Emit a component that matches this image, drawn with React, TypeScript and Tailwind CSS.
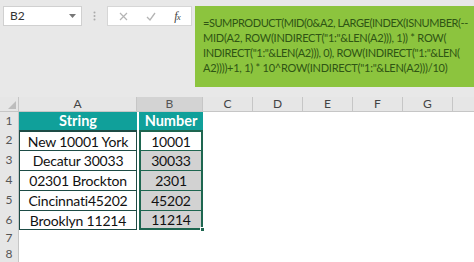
import React from "react";

const formulaLines = [
  { text: "=SUMPRODUCT(MID(0&A2, LARGE(INDEX(ISNUMBER(--", cls: "tracking-[-0.45px]" },
  { text: 'MID(A2, ROW(INDIRECT("1:"&LEN(A2))), 1)) * ROW(', cls: "tracking-[-0.25px]" },
  { text: 'INDIRECT("1:"&LEN(A2))), 0), ROW(INDIRECT("1:"&LEN(', cls: "tracking-[-0.35px]" },
  { text: 'A2))))+1, 1) * 10^ROW(INDIRECT("1:"&LEN(A2)))/10)', cls: "tracking-[-0.25px]" },
];

const rows = [
  { a: "New 10001 York", b: "10001" },
  { a: "Decatur 30033", b: "30033" },
  { a: "02301 Brockton", b: "2301" },
  { a: "Cincinnati45202", b: "45202" },
  { a: "Brooklyn 11214", b: "11214" },
];

const otherCols = ["C", "D", "E", "F", "G"];

function RowHead({ n, h }: { n: number; h: string }) {
  return (
    <div
      className={`w-[19px] ${h} shrink-0 bg-[#e6e6e6] border-r border-[#c6c6c6] flex items-center justify-center text-[12px] text-[#555]`}
    >
      {n}
    </div>
  );
}

export default function App() {
  return (
    <div className="w-[474px] h-[262px] bg-white overflow-hidden font-['Lato','Open_Sans',sans-serif]">
      {/* ribbon: name box, formula buttons and formula bar */}
      <div className="h-[97px] bg-[#e8e8e8] flex items-start pt-[6px] pl-[3px]">
        <div className="w-[79px] h-[20px] shrink-0 bg-white border border-[#d0d0d0] flex items-center justify-between pl-[6px] pr-[5px] text-[12px] text-[#333]">
          <span>B2</span>
          <svg width="7" height="4" viewBox="0 0 7 4">
            <path d="M0 0h7L3.5 4z" fill="#777" />
          </svg>
        </div>
        <div className="w-[25px] h-[20px] shrink-0 flex items-center justify-center">
          <svg width="3" height="10" viewBox="0 0 3 10">
            <circle cx="1.5" cy="1.5" r="1" fill="#aaa" />
            <circle cx="1.5" cy="5" r="1" fill="#aaa" />
            <circle cx="1.5" cy="8.5" r="1" fill="#aaa" />
          </svg>
        </div>
        <div className="w-[85px] h-[20px] shrink-0 bg-white border border-[#d6d6d6] flex items-center">
          <div className="w-[30px] flex justify-center">
            <svg width="9" height="9" viewBox="0 0 9 9">
              <path d="M1 1l7 7M8 1l-7 7" stroke="#b4b4b4" strokeWidth="1.2" />
            </svg>
          </div>
          <div className="w-[26px] flex justify-center">
            <svg width="10" height="9" viewBox="0 0 10 9">
              <path d="M1 5l3 3 5-7" stroke="#b4b4b4" strokeWidth="1.3" fill="none" />
            </svg>
          </div>
          <div className="flex-1 flex justify-center font-['Liberation_Serif',serif] italic text-[12px] text-[#444] leading-none">
            f<span className="text-[9px] -ml-[1px] mt-[3px]">x</span>
          </div>
        </div>
        <div className="ml-[3px] flex-1 min-w-0 h-[81px] bg-[#8cc43e] pl-[8px] pt-[9px] text-[11px] leading-[15px] text-[#2f5514] whitespace-nowrap overflow-hidden">
          {formulaLines.map((l) => (
            <div key={l.text} className={l.cls}>
              {l.text}
            </div>
          ))}
        </div>
      </div>

      {/* column headers */}
      <div className="h-[15px] flex bg-[#e6e6e6] border-b border-[#c6c6c6] text-[12px] text-[#444]">
        <div className="w-[19px] shrink-0 border-r border-[#c6c6c6] flex items-end justify-end p-[2px]">
          <svg width="8" height="8" viewBox="0 0 8 8">
            <path d="M8 0v8H0z" fill="#bdbdbd" />
          </svg>
        </div>
        <div className="w-[118px] shrink-0 border-r border-[#c6c6c6] flex items-center justify-center">A</div>
        <div className="w-[66px] shrink-0 bg-[#d3d3d3] border-r border-[#c6c6c6] flex items-center justify-center text-[#555]">B</div>
        {otherCols.map((c) => (
          <div key={c} className="w-[50px] shrink-0 border-r border-[#c6c6c6] flex items-center justify-center">
            {c}
          </div>
        ))}
        <div className="flex-1" />
      </div>

      {/* table header row */}
      <div className="flex h-[18px]">
        <RowHead n={1} h="h-[18px]" />
        <div className="w-[118px] shrink-0 bg-[#10a09a] text-white font-bold text-[14.5px] flex items-center justify-center">
          String
        </div>
        <div className="w-[2px] shrink-0" />
        <div className="w-[64px] shrink-0 bg-[#10a09a] text-white font-bold text-[14.5px] flex items-center justify-center">
          Number
        </div>
      </div>

      {/* data rows */}
      {rows.map((r, i) => (
        <div key={r.a} className="flex h-[20px]">
          <RowHead n={i + 2} h="h-[20px]" />
          <div
            className={`w-[118px] shrink-0 border-l border-r border-[#1d4b45] ${
              i === 0 ? "border-t-2" : "border-t"
            } ${i === rows.length - 1 ? "border-b" : ""} flex items-center justify-center text-[14px] tracking-[-0.2px] text-[#111]`}
          >
            {r.a}
          </div>
          <div className="w-[2px] shrink-0" />
          <div
            className={`relative w-[64px] shrink-0 border-x-2 border-[#1e6650] ${
              i === 0 ? "border-t-2 bg-white" : "border-t bg-[#d2d2d2]"
            } ${i === rows.length - 1 ? "border-b-2" : ""} flex items-center justify-center text-[14px] tracking-[-0.2px] text-[#111]`}
          >
            {r.b}
            {i === rows.length - 1 && (
              <span className="absolute -right-[4px] -bottom-[4px] w-[5px] h-[5px] bg-[#1e6650] border border-white" />
            )}
          </div>
        </div>
      ))}

      <div className="flex h-[15px]">
        <RowHead n={7} h="h-[15px]" />
      </div>
      <div className="flex h-[17px]">
        <RowHead n={8} h="h-[17px]" />
      </div>
    </div>
  );
}
